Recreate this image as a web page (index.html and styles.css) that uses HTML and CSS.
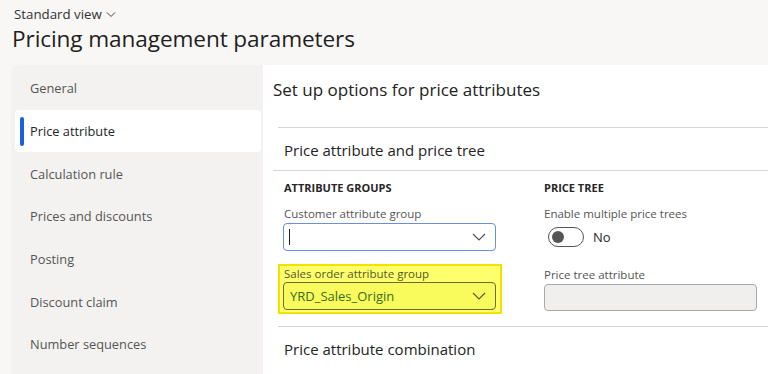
FILE: index.html
```html
<!DOCTYPE html>
<html>
<head>
<meta charset="utf-8">
<link rel="stylesheet" href="styles.css">
</head>
<body>
<div class="page">
  <div class="view">Standard view <svg class="vchev" width="10" height="7" viewBox="0 0 10 7"><path d="M1 1.5 L5 5.5 L9 1.5" fill="none" stroke="#444" stroke-width="1"/></svg></div>
  <h1 class="title">Pricing management parameters</h1>
  <div class="card">
    <nav class="nav">
      <div class="nav-item">General</div>
      <div class="nav-item active"><span class="bar"></span>Price attribute</div>
      <div class="nav-item">Calculation rule</div>
      <div class="nav-item">Prices and discounts</div>
      <div class="nav-item">Posting</div>
      <div class="nav-item">Discount claim</div>
      <div class="nav-item">Number sequences</div>
    </nav>
    <main class="content">
      <h2 class="page-head">Set up options for price attributes</h2>
      <section class="section">
        <h3 class="sec-title">Price attribute and price tree</h3>
        <div class="cols">
          <div class="col">
            <div class="group">ATTRIBUTE GROUPS</div>
            <div class="field">
              <label class="lbl">Customer attribute group</label>
              <div class="select focus"><span class="caret"></span><svg class="chev" width="14" height="8" viewBox="0 0 14 8"><path d="M1 1 L7 7 L13 1" fill="none" stroke="#555" stroke-width="1.2"/></svg></div>
            </div>
            <div class="field hl">
              <label class="lbl">Sales order attribute group</label>
              <div class="select sel-hl"><span class="val">YRD_Sales_Origin</span><svg class="chev" width="14" height="8" viewBox="0 0 14 8"><path d="M1 1 L7 7 L13 1" fill="none" stroke="#555" stroke-width="1.2"/></svg></div>
            </div>
          </div>
          <div class="col col2">
            <div class="group">PRICE TREE</div>
            <div class="field">
              <label class="lbl">Enable multiple price trees</label>
              <div class="toggle-row"><span class="toggle"><span class="knob"></span></span><span class="no">No</span></div>
            </div>
            <div class="field f2">
              <label class="lbl">Price tree attribute</label>
              <div class="select disabled"></div>
            </div>
          </div>
        </div>
      </section>
      <section class="section s2">
        <h3 class="sec-title">Price attribute combination</h3>
      </section>
    </main>
  </div>
</div>
</body>
</html>
```
FILE: styles.css
```css
* { box-sizing: border-box; }
html, body { margin: 0; padding: 0; }
body {
  background: #f8f7f6;
  font-family: "Open Sans", "Noto Sans", sans-serif;
  color: #242424;
  width: 768px;
  height: 374px;
  overflow: hidden;
}
.page { padding: 4px 0 0 11px; }
.view {
  font-size: 13.3px;
  color: #333;
  padding-left: 3px;
  height: 20px;
  line-height: 20px;
  display: flex;
  align-items: center;
  gap: 4px;
}
.vchev { margin-top: 1px; }
.title {
  margin: 0;
  font-size: 22.6px;
  font-weight: 400;
  letter-spacing: -0.1px;
  line-height: 30px;
  color: #1f1f1f;
  padding-left: 1px;
  height: 41px;
}
.card {
  display: flex;
  background: #fff;
  border-radius: 8px 0 0 0;
  height: 320px;
  overflow: hidden;
}
.nav {
  width: 252px;
  flex-shrink: 0;
  background: #f3f2f1;
  padding: 2px 2px 0 4px;
  display: flex;
  flex-direction: column;
}
.nav-item {
  height: 42.7px;
  display: flex;
  align-items: center;
  padding-left: 15px;
  font-size: 12.8px;
  color: #555;
  position: relative;
}
.nav-item.active {
  background: #fff;
  border-radius: 4px;
  color: #262626;
}
.bar {
  position: absolute;
  left: 5px;
  top: 7px;
  bottom: 6px;
  width: 4px;
  border-radius: 2px;
  background: #1a5fe0;
}
.content {
  flex: 1;
  min-width: 0;
  padding: 0 0 0 10px;
}
.page-head {
  margin: 0;
  font-size: 17px;
  font-weight: 400;
  color: #222;
  height: 62px;
  line-height: 50px;
}
.section {
  border-top: 1px solid #d6d6d6;
  margin-left: 5px;
}
.sec-title {
  margin: 0;
  font-size: 15px;
  font-weight: 400;
  color: #242424;
  height: 43px;
  line-height: 44px;
  border-bottom: 1px solid #d6d6d6;
  margin-left: -5px;
  padding-left: 11px;
}
.cols {
  display: flex;
  padding: 8px 0 0 6px;
  height: 155px;
}
.col { width: 260px; flex-shrink: 0; }
.col2 { width: 230px; }
.group {
  font-size: 11px;
  font-weight: 700;
  color: #262626;
  height: 20px;
  line-height: 18px;
}
.field { margin-top: 8px; }
.lbl {
  display: block;
  font-size: 11.5px;
  color: #555;
  height: 16px;
  line-height: 14px;
}
.select {
  width: 213px;
  height: 28px;
  border: 1px solid #8a8a8a;
  border-radius: 4px;
  display: flex;
  align-items: center;
  padding: 0 9px 0 5px;
  margin-left: -1px;
}
.select.focus { border: 1.5px solid #6b8fdb; }
.caret {
  width: 1px;
  height: 16px;
  background: #222;
}
.chev { margin-left: auto; }
.hl {
  margin-left: -6px;
  margin-top: 13px;
  width: 224px;
  background: #ffff6e;
  border: 2px solid #f2e200;
  padding: 3px 0 3px 4px;
  height: 50px;
}
.hl .lbl { color: #505a1e; height: 14px; line-height: 12px; margin-top: -1px; }
.sel-hl {
  border: 1px solid #6f6a33;
  background: #f9fb5c;
}
.sel-hl .chev path { stroke: #5a5a30; }
.val {
  font-size: 13px;
  color: #3a6e22;
  padding-left: 1px;
}
.toggle-row {
  display: flex;
  align-items: center;
  height: 28px;
  padding-left: 4px;
}
.toggle {
  width: 36px;
  height: 20px;
  border: 1px solid #555;
  border-radius: 10px;
  position: relative;
  display: inline-block;
}
.knob {
  position: absolute;
  left: 3px;
  top: 3px;
  width: 12px;
  height: 12px;
  border-radius: 50%;
  background: #555;
}
.no {
  margin-left: 9px;
  font-size: 13px;
  color: #262626;
}
.f2 { margin-top: 17px; }
.disabled {
  margin-left: 0;
  background: #f0efee;
  border: 1px solid #a9a9a9;
  height: 27px;
}
.s2 .sec-title { border-bottom: none; height: 44px; }
.s2 { margin-left: 5px; }
```
